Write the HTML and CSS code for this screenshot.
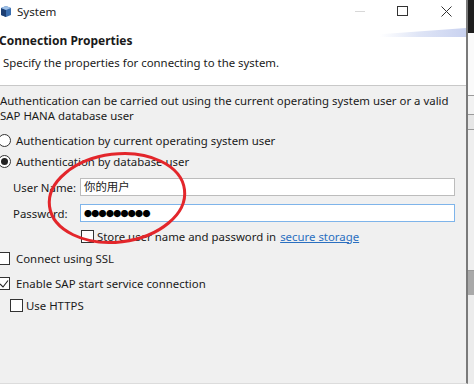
FILE: index.html
```html
<!DOCTYPE html>
<html lang="en">
<head>
  <meta charset="UTF-8">
  <title>System</title>
  <link rel="stylesheet" href="styles.css">
</head>
<body>

  <div class="screen">
    <div class="dialog">

      <!-- Title bar -->
      <div class="titlebar">
        <svg class="app-icon" width="12" height="12" viewBox="0 0 12 12">
          <polygon points="1,3 6,1 11,3 11,10 6,12 1,10" fill="#3b6fb0"/>
          <polygon points="1,3 6,5 6,12 1,10" fill="#1d3f73"/>
          <polygon points="1,3 6,1 11,3 6,5" fill="#9fc0e6"/>
        </svg>
        <span class="title">System</span>
        <div class="win-buttons">
          <span class="btn-min"></span>
          <span class="btn-max"></span>
          <svg class="btn-close" width="11" height="11" viewBox="0 0 11 11">
            <path d="M0.5 0.5 L10.5 10.5 M10.5 0.5 L0.5 10.5" stroke="#333" stroke-width="1"/>
          </svg>
        </div>
      </div>

      <!-- Wizard header -->
      <div class="header">
        <div class="banner"></div>
        <h1>Connection Properties</h1>
        <p>Specify the properties for connecting to the system.</p>
      </div>

      <!-- Body -->
      <div class="content">
        <p class="intro">Authentication can be carried out using the current operating system user or a valid SAP HANA database user</p>

        <label class="option radio-row">
          <span class="radio"></span>
          Authentication by current operating system user
        </label>
        <label class="option radio-row row-db">
          <span class="radio checked"></span>
          Authentication by database user
        </label>

        <div class="fields">
          <span class="field-label">User Name:</span>
          <div class="input">你的用户</div>
          <span class="field-label">Password:</span>
          <div class="input focused"><span class="dots">●●●●●●●●●</span></div>
        </div>

        <label class="option store-row">
          <span class="checkbox"></span>
          Store user name and password in <a href="#">secure storage</a>
        </label>

        <label class="option ssl-row">
          <span class="checkbox"></span>
          Connect using SSL
        </label>
        <label class="option sap-row">
          <span class="checkbox checked">
            <svg width="10" height="10" viewBox="0 0 10 10"><path d="M1 5 L4 8 L9 1.5" fill="none" stroke="#222" stroke-width="1.1"/></svg>
          </span>
          Enable SAP start service connection
        </label>
        <label class="option https-row">
          <span class="checkbox"></span>
          Use HTTPS
        </label>
      </div>

      <!-- Red marker drawn over the form -->
      <svg class="marker" width="150" height="100" viewBox="0 0 150 100">
        <ellipse cx="75" cy="50" rx="68" ry="44" transform="rotate(-7 75 50)" fill="none" stroke="#e3262b" stroke-width="3"/>
      </svg>
    </div>

    <!-- Background window edge -->
    <div class="backdrop">
      <div class="bd-dark"></div>
      <div class="bd-white"></div>
      <div class="bd-line"></div>
      <div class="bd-gap"></div>
      <div class="bd-line"></div>
      <div class="bd-light"></div>
      <div class="bd-line"></div>
      <div class="bd-mid"></div>
      <div class="bd-line"></div>
      <div class="bd-block"></div>
      <div class="bd-rest"></div>
    </div>
  </div>

</body>
</html>
```

FILE: styles.css
```css
/* Global */
* {
  margin: 0;
  padding: 0;
  box-sizing: border-box;
}

body {
  font-family: "Noto Sans", "Noto Sans CJK SC", sans-serif;
  font-size: 11.4px;
  color: #1a1a1a;
  background: #f0f0f0;
  width: 474px;
  height: 384px;
  overflow: hidden;
}

.screen {
  display: flex;
  height: 384px;
}

/* Dialog */
.dialog {
  position: relative;
  flex: 1;
  display: flex;
  flex-direction: column;
  background: #f0f0f0;
  border-right: 2px solid #7a7a7a;
  border-bottom: 1px solid #dcdcdc;
}

.titlebar {
  display: flex;
  align-items: center;
  height: 22px;
  background: #fff;
}

.app-icon {
  margin: 0 5px 0 0;
}

.title {
  font-size: 11.6px;
  color: #222;
}

.win-buttons {
  margin-left: auto;
  display: flex;
  align-items: center;
  height: 22px;
}

.btn-min {
  width: 10px;
  height: 1px;
  background: #d8d8d8;
  margin-right: 32px;
}

.btn-max {
  width: 11px;
  height: 10px;
  border: 1px solid #333;
  margin-right: 33px;
}

.btn-close {
  margin-right: 14px;
}

/* Header */
.header {
  position: relative;
  background: #fff;
  height: 64px;
  padding-top: 10px;
  border-bottom: 1px solid #c8c8c8;
}

.banner {
  position: absolute;
  top: 6px;
  right: 0;
  width: 86px;
  height: 9px;
  background: linear-gradient(to right, rgba(220, 226, 245, 0) 0%, #dfe5f6 45%, #c9d2f0 100%);
  clip-path: polygon(0 70%, 100% 0, 100% 100%, 0 100%);
}

.header h1 {
  font-size: 12px;
  font-weight: 700;
  margin-left: -1px;
  line-height: 18px;
}

.header p {
  margin: 5px 0 0 3px;
  line-height: 16px;
}

/* Body */
.content {
  padding-top: 7px;
}

.intro {
  line-height: 15px;
  padding-right: 8px;
}

.option {
  display: flex;
  align-items: center;
  height: 21px;
  line-height: 16px;
}

.radio-row {
  margin-left: -2px;
  gap: 5px;
}

.radio-row:first-of-type {
  margin-top: 7px;
}

.radio {
  width: 13px;
  height: 13px;
  border: 1px solid #333;
  border-radius: 50%;
  background: #fff;
  position: relative;
}

.radio.checked::after {
  content: "";
  position: absolute;
  top: 2px;
  left: 2px;
  width: 7px;
  height: 7px;
  border-radius: 50%;
  background: #222;
}

.fields {
  display: grid;
  grid-template-columns: 67px 375px;
  row-gap: 8px;
  align-items: center;
  padding-left: 13px;
  margin-top: 6px;
}

.input {
  height: 18px;
  border: 1px solid #bcbcbc;
  background: #fff;
  padding-left: 3px;
  line-height: 16px;
}

.input.focused {
  border-color: #7eb4ea;
}

.dots {
  font-size: 8px;
  letter-spacing: -0.7px;
  color: #000;
}

.checkbox {
  width: 13px;
  height: 13px;
  border: 1px solid #333;
  background: #fff;
  display: flex;
  align-items: center;
  justify-content: center;
}

.store-row {
  margin: 4px 0 0 81px;
  gap: 3px;
}

.store-row a {
  color: #2a6fc0;
  margin-left: 1px;
}

.ssl-row {
  margin: 1px 0 0 -3px;
  gap: 6px;
}

.sap-row {
  margin: 4px 0 0 -3px;
  gap: 6px;
}

.https-row {
  margin: 1px 0 0 10px;
  gap: 3px;
}

/* Red marker */
.marker {
  position: absolute;
  left: 42px;
  top: 148px;
}

/* Background window edge */
.backdrop {
  width: 6px;
  display: flex;
  flex-direction: column;
  background: #eeeeee;
}

.bd-dark { height: 33px; background: #1e1e1e; }
.bd-white { height: 62px; background: #fafafa; }
.bd-line { height: 1px; background: #9a9a9a; }
.bd-gap { height: 18px; background: #f2f2f2; }
.bd-light { height: 14px; background: #e6e6e6; }
.bd-mid { height: 140px; background: #efefef; }
.bd-block { height: 24px; background: #a9a9a9; }
.bd-rest { flex: 1; background: #ececec; }
```
